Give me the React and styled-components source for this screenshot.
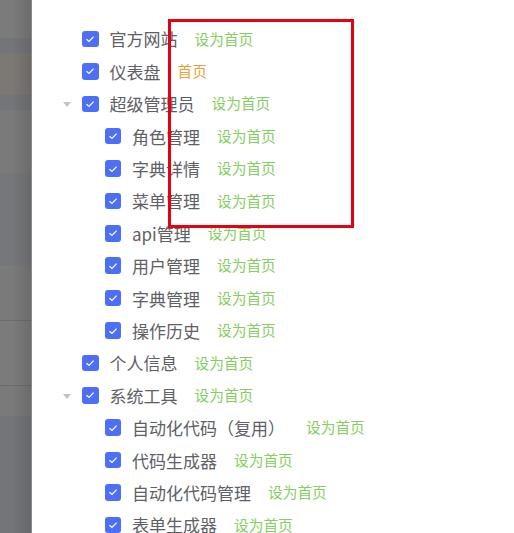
import React from "react";
import styled, { createGlobalStyle } from "styled-components";

const Global = createGlobalStyle`
  html, body { margin: 0; padding: 0; background: #fff; overflow: hidden; }
  #root { height: 533px; }
`;

const Page = styled.div`
  position: relative;
  display: flex;
  height: 533px;
  width: 514px;
  overflow: hidden;
  font-family: "Noto Sans CJK SC", "Noto Sans", sans-serif;
`;

const Backdrop = styled.div`
  position: relative;
  width: 31px;
  flex: none;
  display: flex;
  flex-direction: column;
  border-right: 1px solid #8a8a8a;
  &::after {
    content: "";
    position: absolute;
    inset: 0;
    background: linear-gradient(to right, rgba(0,0,0,0) 40%, rgba(0,0,0,0.12) 100%);
  }
`;

const Band = styled.div`
  height: ${(p) => p.$h}px;
  flex: ${(p) => (p.$grow ? 1 : "none")};
  background: ${(p) => p.$c};
  border-bottom: ${(p) => (p.$line ? "1px solid #6c6c6c" : "none")};
`;

const Drawer = styled.div`
  flex: 1;
  background: #fff;
  padding-top: 22.8px;
`;

const Row = styled.div`
  display: flex;
  align-items: center;
  height: 32.4px;
  padding-left: ${(p) => 24 + (p.$level - 1) * 22.5}px;
`;

const Caret = styled.span`
  width: 22px;
  flex: none;
  display: flex;
  justify-content: center;
  align-items: center;
  &::before {
    content: "";
    display: ${(p) => (p.$show ? "block" : "none")};
    border-left: 4.5px solid transparent;
    border-right: 4.5px solid transparent;
    border-top: 5px solid #c0c4cc;
    margin-top: 2px;
  }
`;

const Box = styled.span`
  width: 16.5px;
  height: 16.5px;
  margin-left: 4px;
  margin-right: 11px;
  flex: none;
  border-radius: 3px;
  background: #4d6ff7;
  display: flex;
  align-items: center;
  justify-content: center;
`;

const Label = styled.span`
  font-size: 17px;
  line-height: 1;
  color: #5e6066;
  white-space: nowrap;
`;

const HomeLink = styled.span`
  margin-left: ${(p) => p.$gap || 17}px;
  font-size: 14.7px;
  line-height: 1;
  color: ${(p) => (p.$home ? "#e6a23c" : "#85ce61")};
  white-space: nowrap;
`;

const Highlight = styled.div`
  position: absolute;
  left: 168px;
  top: 19px;
  width: 186px;
  height: 209px;
  box-sizing: border-box;
  border: 3px solid #e60012;
  pointer-events: none;
`;

const Check = () => (
  <svg width="10" height="8" viewBox="0 0 10 8">
    <path d="M1.5 4.2 L4 6.4 L8.6 1.6" fill="none" stroke="#fff" strokeWidth="1.3" />
  </svg>
);

const nodes = [
  { label: "官方网站", level: 1 },
  { label: "仪表盘", level: 1, home: true },
  { label: "超级管理员", level: 1, expand: true },
  { label: "角色管理", level: 2 },
  { label: "字典详情", level: 2 },
  { label: "菜单管理", level: 2 },
  { label: "api管理", level: 2 },
  { label: "用户管理", level: 2 },
  { label: "字典管理", level: 2 },
  { label: "操作历史", level: 2 },
  { label: "个人信息", level: 1 },
  { label: "系统工具", level: 1, expand: true },
  { label: "自动化代码（复用）", level: 2, gap: 21 },
  { label: "代码生成器", level: 2 },
  { label: "自动化代码管理", level: 2 },
  { label: "表单生成器", level: 2 },
];

const bands = [
  { h: 38, c: "#7b7b7b" },
  { h: 15, c: "#737578" },
  { h: 42, c: "#7c7873" },
  { h: 15, c: "#737578" },
  { h: 63, c: "#7a7a7a" },
  { h: 92, c: "#75777a" },
  { h: 55, c: "#7a7a7a", line: true },
  { h: 64, c: "#7b7b7b", line: true },
  { h: 30, c: "#7a7a7a" },
  { grow: true, c: "#737578" },
];

export default function App() {
  return (
    <Page>
      <Global />
      <Backdrop>
        {bands.map((b, i) => (
          <Band key={i} $h={b.h} $c={b.c} $grow={b.grow} $line={b.line} />
        ))}
      </Backdrop>
      <Drawer>
        {nodes.map((n, i) => (
          <Row key={i} $level={n.level}>
            <Caret $show={n.expand} />
            <Box>
              <Check />
            </Box>
            <Label>{n.label}</Label>
            <HomeLink $home={n.home} $gap={n.gap}>
              {n.home ? "首页" : "设为首页"}
            </HomeLink>
          </Row>
        ))}
      </Drawer>
      <Highlight />
    </Page>
  );
}
